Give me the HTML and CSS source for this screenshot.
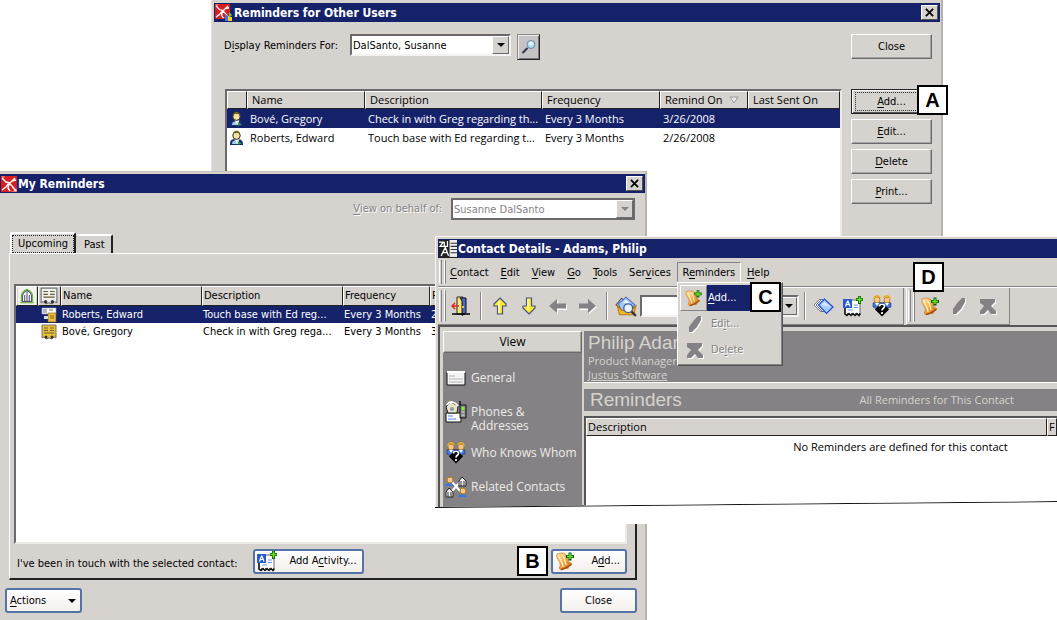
FILE: index.html
```html
<!DOCTYPE html>
<html lang="en">
<head>
<meta charset="utf-8">
<title>Reminders</title>
<link rel="stylesheet" href="styles.css">
</head>
<body>
<svg class="defs" aria-hidden="true">
  <defs>
    <linearGradient id="gold" x1="0" y1="0" x2="1" y2="1"><stop offset="0" stop-color="#ffe9b0"/><stop offset=".45" stop-color="#f8b04c"/><stop offset="1" stop-color="#b8600c"/></linearGradient>
  </defs>
  <symbol id="bell" viewBox="0 0 20 20">
    <circle cx="12" cy="16" r="2" fill="#d88020"/>
    <path d="M2 3C5 2 9 1 11 4c2 2 2 5 3 7l3 2c-2 2-6 4-11 6l-2-2c2-2 1-5 0-7S1 6 2 3z" fill="url(#gold)" stroke="#c87828" stroke-width=".7"/>
    <path d="M4 5c1 4 4 6 4 11M7 4c3 3 3 6 4 10" stroke="#fff0c8" stroke-width="1.200" fill="none"/>
    <path d="M6 18.500c4-1 8-3 10.500-5.500" stroke="#a04808" stroke-width="1.300" fill="none"/>
    <path d="M13.500 2v2H11v3h2.500v2.500h3V7H19V4h-2.500V1.500h-3z" fill="#0c5c0c"/>
    <path d="M15 2.500V8M12 5.500h6" stroke="#62e622" stroke-width="1.500"/>
  </symbol>
  <symbol id="activity" viewBox="0 0 22 22">
    <path d="M3 5h15v13l-2 2-2-2-2 2-2-2-2 2-2-2-2 2-1-1z" fill="#fff" stroke="#667" stroke-width="1"/>
    <path d="M3 12v7l2 1.500 2-2 2 2 2-2 2 2 2-2 2 2 1.500-2" fill="none" stroke="#111" stroke-width="1.500"/>
    <rect x="1" y="4" width="9" height="9" fill="#2a5ac8"/>
    <path d="M3.500 11.500l2-5.500h.5l2 5.500M4 9.500h3.500" stroke="#fff" stroke-width="1.200" fill="none"/>
    <path d="M12 10h4M12 12.500h4M6 15h5" stroke="#5a9cf0" stroke-width="1"/>
    <path d="M14 3h2V1h3v2h2v3h-2v3h-3V6h-2z" fill="#0c5c0c"/>
    <path d="M17.500 1.500V8M14.500 4.500h6" stroke="#62e622" stroke-width="1.500"/>
  </symbol>
  <symbol id="whom" viewBox="0 0 20 22">
    <path d="M1 8l3-1h4l2 2 2-2h4l3 1v4l-5 2H5l-4-2z" fill="#3c78e0" stroke="#123" stroke-width=".5"/>
    <circle cx="5" cy="5" r="3" fill="#f4c890" stroke="#b07010" stroke-width=".8"/>
    <circle cx="15" cy="5" r="3" fill="#f4c890" stroke="#b07010" stroke-width=".8"/>
    <path d="M2 4c0-4 6-4 6-1M12 3c0-3 6-3 6 1" stroke="#e8b020" stroke-width="1.500" fill="none"/>
    <path d="M3 8l2 3 2-3M13 8l2 3 2-3" fill="#fff"/>
    <path d="M10 7l7 7.500-7 7-7-7z" fill="#000"/>
    <path d="M7.500 11.500c0-3 5-3 5 0 0 2-2.500 1.500-2.500 4M10 17v2" stroke="#fff" stroke-width="1.700" fill="none"/>
  </symbol>
  <symbol id="pencil" viewBox="0 0 20 20">
    <path d="M14 3h3v4l-4 7-5 5H5v-5l5-7z" fill="#fff"/>
    <path d="M13 2h3v4l-4 7-5 5H4v-5l5-7z" fill="#858285"/>
  </symbol>
  <symbol id="cross" viewBox="0 0 20 20">
    <path d="M3 4h15v3l-4 4 5 5v3h-5l-3-4-4 4H3v-3l4-5-4-3z" fill="#fff"/>
    <path d="M2 3h15v3l-4 4 5 5v3h-5l-3-4-4 4H2v-3l4-5-4-3z" fill="#858285"/>
  </symbol>
  <symbol id="man" viewBox="0 0 14 16">
    <path d="M0 15c0-4 2-5 4-5h5c3 0 5 2 5 5v1H0z" fill="#14306e"/>
    <path d="M2 15l1-3 3-1 3 1 3 3z" fill="#a8cce8"/>
    <path d="M5 10h5l-2 5z" fill="#fff"/>
    <circle cx="7" cy="6" r="4" fill="#f2e0a0" stroke="#222" stroke-width="1"/>
    <path d="M3 6c-1-7 9-7 8 0l-2-3H5z" fill="#6c6018"/>
    <path d="M8 12l4 2-3 2z" fill="#2c9a46"/>
  </symbol>
  <symbol id="figure" viewBox="0 0 16 16">
    <rect width="16" height="16" fill="#d81e1e"/>
    <path d="M0 0h4l-2 4zM16 12v4h-6z" fill="#ee6a60"/>
    <path d="M1 2l4 4 4 1 5-5M8 7l3 3 4 5M8 7L5 11l-4 3M8 8l-1 4 2 3M11 5l4-1" stroke="#fff" stroke-width="1.400" fill="none"/>
  </symbol>
  <symbol id="card" viewBox="0 0 16 16">
    <path d="M1 1h14v13l-2-1-2 2-3-1-3 1-2-2-2 1z" fill="currentColor" stroke="#555" stroke-width=".8"/>
    <path d="M3 4h4M9 4h4M3 6.500h4M9 6.500h4M3 9h10" stroke="#665c30" stroke-width="1"/>
    <circle cx="5" cy="13" r="1.500" fill="#333"/><circle cx="11" cy="13" r="1.500" fill="#333"/>
  </symbol>
  <symbol id="down" viewBox="0 0 8 4"><path d="M0 0h8L4 4z" fill="currentColor"/></symbol>
  <symbol id="close" viewBox="0 0 10 9"><path d="M1 .5l8 8M9 .5l-8 8" stroke="#000" stroke-width="2"/></symbol>
</svg>

<main class="desktop">
  <section class="window users" aria-label="Reminders for Other Users">
    <header class="title">
      <svg class="i18" viewBox="0 0 18 18"><use href="#figure" width="15" height="15"/><path d="M10 10l3 2v5h-3z" fill="#3a76d8"/><path d="M14 8l3 3-3 3z" fill="#70c040"/><path d="M13 13h4v4h-4z" fill="#f8d020"/></svg>
      <h1>Reminders for Other Users</h1>
      <button class="x" aria-label="Close window"><svg><use href="#close"/></svg></button>
    </header>
    <div class="users-top">
      <label for="who">D<u>i</u>splay Reminders For:</label>
      <span class="combo wide">
        <select id="who"><option>DalSanto, Susanne</option></select>
        <span class="drop"><svg><use href="#down"/></svg></span>
      </span>
      <button class="find" aria-label="Find user"><svg viewBox="0 0 18 18"><path d="M2.500 15l5-5" stroke="#334" stroke-width="2"/><circle cx="11" cy="6.500" r="4" fill="#a8dcf8" stroke="#7486a8" stroke-width="1"/><circle cx="11" cy="5.500" r="2" fill="#effaff"/></svg></button>
      <button class="btn push">Close</button>
    </div>
    <div class="users-main">
      <div class="sunken">
        <table class="grid sans">
          <colgroup><col class="c20"><col class="c118"><col class="c177"><col class="c118"><col class="c88"><col></colgroup>
          <thead><tr><th></th><th>Name</th><th>Description</th><th>Frequency</th><th>Remind On <svg class="sort" viewBox="0 0 10 8"><path d="M1 1h8L5 7z" fill="#e8e8e8" stroke="#999"/></svg></th><th>Last Sent On</th></tr></thead>
          <tbody>
            <tr class="sel"><td><svg class="man"><use href="#man"/></svg></td><td>Bové, Gregory</td><td>Check in with Greg regarding th...</td><td>Every 3 Months</td><td>3/26/2008</td><td></td></tr>
            <tr><td><svg class="man"><use href="#man"/></svg></td><td>Roberts, Edward</td><td>Touch base with Ed regarding t...</td><td>Every 3 Months</td><td>2/26/2008</td><td></td></tr>
          </tbody>
        </table>
      </div>
      <div class="side-buttons">
        <button class="btn default"><span><u>A</u>dd...</span></button>
        <button class="btn"><u>E</u>dit...</button>
        <button class="btn"><u>D</u>elete</button>
        <button class="btn"><u>P</u>rint...</button>
        <b class="badge badge-a">A</b>
      </div>
    </div>
  </section>

  <section class="window mine" aria-label="My Reminders">
    <header class="title">
      <svg class="i16"><use href="#figure"/></svg>
      <h1>My Reminders</h1>
      <button class="x" aria-label="Close window"><svg><use href="#close"/></svg></button>
    </header>
    <div class="behalf">
      <label for="behalf"><u>V</u>iew on behalf of:</label>
      <span class="combo off">
        <select id="behalf" disabled><option>Susanne DalSanto</option></select>
        <span class="drop"><svg><use href="#down"/></svg></span>
      </span>
    </div>
    <nav class="tabs" role="tablist">
      <button class="tab on" role="tab" aria-selected="true"><span>Upcoming</span></button>
      <button class="tab" role="tab" aria-selected="false"><span>Past</span></button>
    </nav>
    <div class="panel">
      <div class="sunken">
        <table class="grid">
          <colgroup><col class="c22"><col class="c23"><col class="c141"><col class="c141"><col class="c87"><col></colgroup>
          <thead><tr>
            <th class="pic"><svg class="i18" viewBox="0 0 16 16"><rect width="16" height="16" fill="#f2f2ec"/><path d="M4 13V8c0-2 2-4 4-5 2 1 4 3 4 5v5z" fill="#fff" stroke="#557" stroke-width="1"/><path d="M6 13V7M8 13V4M10 13V7" stroke="#446" stroke-width=".9"/><path d="M3 13V8c0-3 3-5 5-6 2 1 5 3 5 6v5" fill="none" stroke="#6cb43c"/><path d="M2 14h12" stroke="#6cb43c"/></svg></th>
            <th class="pic"><svg class="i18 pale"><use href="#card"/></svg></th>
            <th>Name</th><th>Description</th><th>Frequency</th><th>Remind On</th></tr></thead>
          <tbody>
            <tr class="sel"><td></td><td class="pic"><svg class="i16" viewBox="0 0 16 16"><path d="M1 1h14v6H1z" fill="#fff" stroke="#99a" stroke-width=".6"/><path d="M2 3h4M8 3h4M2 5h4" stroke="#667"/><path d="M7 6h8v9H7z" fill="#e8c040" stroke="#765c10" stroke-width=".6"/><path d="M3 9h4v3H3z" fill="#ddd"/><path d="M9 9h4M9 11h4" stroke="#866810"/></svg></td><td>Roberts, Edward</td><td>Touch base with Ed reg...</td><td>Every 3 Months</td><td>2/26/2008</td></tr>
            <tr><td></td><td class="pic"><svg class="i16 amber"><use href="#card"/></svg></td><td>Bové, Gregory</td><td>Check in with Greg rega...</td><td>Every 3 Months</td><td>3/26/2008</td></tr>
          </tbody>
        </table>
      </div>
      <div class="panel-foot">
        <span class="note">I've been in touch with the selected contact:</span>
        <button class="xp act"><svg class="i22"><use href="#activity"/></svg><span>Add A<u>c</u>tivity...</span></button>
        <b class="badge">B</b>
        <button class="xp add"><svg class="i20"><use href="#bell"/></svg><span>A<u>d</u>d...</span></button>
      </div>
    </div>
    <footer class="foot">
      <button class="xp actions"><span><u>A</u>ctions</span><svg class="caret"><use href="#down"/></svg></button>
      <button class="xp mid">Close</button>
    </footer>
  </section>

  <div class="cover">
   <div class="edge">
    <section class="contact" aria-label="Contact Details">
      <header class="title">
        <svg class="i18" viewBox="0 0 17 17"><rect width="17" height="17" fill="#222"/><path d="M10 0h7v16h-7z" fill="#eee"/><path d="M11 3h6M11 6h6M11 9h6M11 12h6" stroke="#333"/><path d="M0 2h4L1 6h4M5 2v4h3V1M2 15l4-8 3 8M3 12h5" stroke="#fff" stroke-width="1.200" fill="none"/></svg>
        <h1>Contact Details - Adams, Philip</h1>
      </header>
      <nav class="menubar">
        <i class="grip"></i>
        <button><u>C</u>ontact</button>
        <button><u>E</u>dit</button>
        <button><u>V</u>iew</button>
        <button><u>G</u>o</button>
        <button><u>T</u>ools</button>
        <button>Ser<u>v</u>ices</button>
        <div class="open">
          <button class="opened">R<u>e</u>minders</button>
          <div class="dropdown">
            <button class="item hot"><svg class="i20"><use href="#bell"/></svg><span><u>A</u>dd...</span></button>
            <button class="item" disabled><svg class="i20"><use href="#pencil"/></svg><span>Ed<u>i</u>t...</span></button>
            <button class="item" disabled><svg class="i20"><use href="#cross"/></svg><span>De<u>l</u>ete</span></button>
            <b class="badge badge-c">C</b>
          </div>
        </div>
        <button><u>H</u>elp</button>
        <b class="badge badge-d">D</b>
      </nav>
      <div class="toolbar">
        <div class="tools">
          <i class="grip"></i>
          <button aria-label="Exit"><svg class="i20" viewBox="0 0 20 20"><path d="M6 1h6v17H6z" fill="#ffe96a" stroke="#223" stroke-width="1"/><path d="M9 2h6v15l-4 2.500V5z" fill="#5268b8" stroke="#112" stroke-width="1"/><path d="M12 10v2" stroke="#ffe96a" stroke-width="1.500"/><path d="M1 18h18" stroke="#000" stroke-width="1.500"/><path d="M8 10H2M4 7l-3 3 3 3" stroke="#e02828" stroke-width="1.500" fill="none"/></svg></button>
          <i class="sep"></i>
          <button aria-label="Previous contact"><svg class="i20" viewBox="0 0 20 20"><path d="M10 2l6 6v2h-3.500v8h-5v-8H4V8z" fill="#ffea28" stroke="#44508c" stroke-width="1.200"/><path d="M9 5v12" stroke="#fffcc0" stroke-width="1.500"/></svg></button>
          <button aria-label="Next contact"><svg class="i20" viewBox="0 0 20 20"><path d="M10 18l6-6v-2h-3.500V2h-5v8H4v2z" fill="#ffea28" stroke="#44508c" stroke-width="1.200"/><path d="M9 3v11" stroke="#fffcc0" stroke-width="1.500"/></svg></button>
          <button aria-label="Back" disabled><svg class="i20" viewBox="0 0 20 20"><path d="M2 11l8-7v5h9v5h-9v4z" fill="#fff"/><path d="M1 10l8-7v4.500h9v5H9V17z" fill="#858285"/></svg></button>
          <button aria-label="Forward" disabled><svg class="i20" viewBox="0 0 20 20"><path d="M20 11l-8-7v5H3v5h9v4z" fill="#fff"/><path d="M19 10l-8-7v4.500H2v5h9V17z" fill="#858285"/></svg></button>
          <i class="sep"></i>
          <button aria-label="Find contact"><svg class="i22" viewBox="0 0 20 20"><path d="M1 9l5-6 4 4-3 7z" fill="#fff" stroke="#556"/><path d="M3 8l7-6 8 7-5 6H6z" fill="#9ccaf8" stroke="#5068c8" stroke-width="1"/><path d="M7 7l3-3 4 4z" fill="#eef8ff"/><path d="M2 9l2 9h13l2-8-5 4H6z" fill="#f4b830" stroke="#b87810" stroke-width="1"/><circle cx="12" cy="12" r="4" fill="#e4f6ff" stroke="#445c98" stroke-width="1.200"/><path d="M15 15l4 4" stroke="#333" stroke-width="2"/></svg></button>
          <span class="combo jump">
            <select aria-label="Contact"><option></option></select>
            <span class="drop"><svg><use href="#down"/></svg></span>
          </span>
          <i class="sep"></i>
          <button aria-label="Views"><svg class="i20" viewBox="0 0 20 20"><path d="M0 9l6-6 7 7-6 6z" fill="#fff" stroke="#778" stroke-width="1"/><path d="M2 9l6-6 7 7-6 6z" fill="#fff" stroke="#4c70c8"/><path d="M4.500 9l6-6 8.500 8-6.500 6.500z" fill="#a4ccff" stroke="#2848d0" stroke-width="1.200"/><path d="M7.500 9l3-3 6 5" fill="#d8ecff"/></svg></button>
          <button aria-label="Add activity"><svg class="i22"><use href="#activity"/></svg></button>
          <button aria-label="Who knows whom"><svg class="i22"><use href="#whom"/></svg></button>
        </div>
        <div class="tools">
          <i class="grip"></i>
          <button aria-label="Add reminder"><svg class="i20"><use href="#bell"/></svg></button>
          <button aria-label="Edit reminder" disabled><svg class="i20"><use href="#pencil"/></svg></button>
          <button aria-label="Delete reminder" disabled><svg class="i20"><use href="#cross"/></svg></button>
        </div>
      </div>
      <div class="body">
        <aside class="views sans">
          <button class="btn view">View</button>
          <a href="#general"><svg class="i22" viewBox="0 0 22 22"><path d="M2 5h18v13H2z" fill="#f4f4f4" stroke="#111" stroke-width="1"/><path d="M2 5h18" stroke="#fff" stroke-width="2"/><path d="M4 9h6M4 12h14M4 15h14" stroke="#b4b4b4"/></svg><span>General</span></a>
          <a href="#phones"><svg class="i22" viewBox="0 0 22 22"><path d="M1 12h15v9H1z" fill="#fff" stroke="#111"/><path d="M3 15h5M3 18h8" stroke="#4c84d8"/><path d="M1 6l5-5 7 4-1 7H3z" fill="#e4e4cc" stroke="#222"/><path d="M2 4c3-5 8-3 11 1" stroke="#fff" stroke-width="2" fill="none"/><circle cx="7" cy="8" r="2" fill="#999"/><path d="M15 4h6v13h-6z" fill="#888" stroke="#111"/><path d="M15 0v4" stroke="#111" stroke-width="1.500"/><path d="M16.500 6h3v3h-3z" fill="#7ef038"/><path d="M16.500 11h3M16.500 14h3" stroke="#ddd"/></svg><span>Phones &amp; Addresses</span></a>
          <a href="#whoknows"><svg class="i22"><use href="#whom"/></svg><span>Who Knows Whom</span></a>
          <a href="#related"><svg class="i22" viewBox="0 0 22 22"><path d="M7 6l8 9M15 6l-8 9" stroke="#fff" stroke-width="2"/><path d="M0 10c1-4 7-4 9 0z" fill="#3c78e0"/><circle cx="5" cy="4" r="3" fill="#f4c890" stroke="#b87810"/><path d="M13 21c1-4 8-4 9 0z" fill="#3c78e0"/><circle cx="18" cy="15" r="3" fill="#f4c890" stroke="#b87810"/><path d="M14 10V5l3-4 4 4v5zM1 21v-5l3-4 4 4v5z" fill="#eee" stroke="#222"/><path d="M16 10V5M19 10V5M3 21v-5M6 21v-5" stroke="#333"/></svg><span>Related Contacts</span></a>
        </aside>
        <div class="detail sans">
          <div class="who">
            <h2>Philip Adams</h2>
            <p>Product Manager</p>
            <a href="#company">Justus Software</a>
          </div>
          <div class="heading"><h2>Reminders</h2><span>All Reminders for This Contact</span></div>
          <table class="grid list">
            <colgroup><col><col class="c10"></colgroup>
            <thead><tr><th>Description</th><th>F</th></tr></thead>
            <tbody><tr><td class="empty" colspan="2">No Reminders are defined for this contact</td></tr></tbody>
          </table>
        </div>
      </div>
    </section>
   </div>
  </div>
</main>
</body>
</html>
```
FILE: styles.css
```css
:root {
  --face: #d6d3ce;
  --navy: #15226a;
  --grey: #858285;
  --dark: #6b696b;
  --ui: "DejaVu Sans Condensed", "DejaVu Sans", sans-serif;
  --sans: "Open Sans", "Liberation Sans", sans-serif;
}
* { box-sizing: border-box; }
body { margin: 0; background: #fff; color: #000; font: 11px/14px var(--ui); }
button, select { font: inherit; color: inherit; margin: 0; padding: 0; }
button { border: 0; background: none; white-space: nowrap; }
h1, h2, p { margin: 0; font: inherit; }
svg { display: block; flex: none; }
u { text-underline-offset: 2px; }
.defs { position: absolute; width: 0; height: 0; }
.i16 { width: 16px; height: 16px; }
.i18 { width: 18px; height: 18px; }
.i20 { width: 20px; height: 20px; }
.i22 { width: 22px; height: 22px; }

.desktop { position: relative; height: 100vh; min-height: 620px; overflow: hidden; }
.window { position: absolute; background: var(--face); border-right: 2px solid #b5b2b0; }
.users { left: 211px; right: 114px; top: 0; padding: 3px 1px 0 2px; border-left: 1px solid #e7e5e2; }
.mine { left: 0; right: 410px; top: 171px; bottom: 0; padding-top: 2px; border-top: 1px solid #c6c3be; display: flex; flex-direction: column; }

.title { display: flex; align-items: center; gap: 1px; height: 19px; padding: 0 2px 0 1px; background: var(--navy); color: #fff; }
.title h1 { flex: 1; font-size: 12px; font-weight: bold; white-space: nowrap; }
.x { width: 17px; height: 15px; padding: 2px 3px; background: var(--face); border: 1px solid; border-color: #fff #55534f #55534f #fff; }
.x svg { width: 9px; height: 9px; }

.combo { position: relative; display: block; height: 22px; background: #fff; border: 2px solid; border-color: var(--dark) #f4f3f1 #f4f3f1 var(--dark); }
.combo select { display: block; width: 100%; height: 100%; padding: 1px 0 0 1px; border: 0; background: none; appearance: none; outline: 0; }
.combo select:disabled { opacity: 1; }
.drop { position: absolute; right: 0; top: 0; bottom: 0; width: 17px; display: grid; place-items: center; background: var(--face); border: 1px solid; border-color: #fff var(--dark) var(--dark) #fff; pointer-events: none; }
.drop svg, .caret { width: 8px; height: 4px; }
.off { color: #858285; border-right-color: var(--dark); border-bottom-color: var(--dark); }

.btn { height: 25px; background: var(--face); border: 1px solid; border-color: #fff #6b696b #6b696b #fff; box-shadow: inset -1px -1px #a5a29f; text-align: center; }
.default { border-color: #222; box-shadow: inset 1px 1px #fff, inset -1px -1px #555; padding: 2px 3px; }
.default span { display: block; border: 1px dotted #333; line-height: 17px; }

.users-top { display: flex; align-items: flex-start; padding: 12px 8px 0 10px; height: 67px; }
.users-top label { line-height: 24px; width: 126px; white-space: nowrap; }
.wide { width: 161px; margin-right: 6px; }
.find { width: 23px; height: 26px; padding: 3px 2px; background: #c6c3c4; border: 1px solid; border-color: #888 #222 #222 #888; box-shadow: inset 1px 1px #eee, inset -1px -1px #777; }
.find svg { width: 18px; height: 18px; }
.push { margin-left: auto; width: 81px; }
.users-main { display: flex; gap: 9px; padding: 0 8px 0 11px; }
.sunken { flex: 1; min-width: 0; background: #fff; border: 2px solid; border-color: var(--dark) #eceae7 #eceae7 var(--dark); overflow: hidden; }
.users-main .sunken { min-height: 150px; }
.side-buttons { position: relative; width: 81px; display: flex; flex-direction: column; gap: 5px; }

.badge { display: grid; place-items: center; flex: none; width: 31px; height: 30px; background: #fff; border: 2px solid #000; color: #000; font: bold 20px/20px "Liberation Sans", Arial, sans-serif; }
.badge-a { position: absolute; left: 66px; top: -4px; }
.badge-c { position: absolute; left: 72px; top: -1px; }
.badge-d { position: absolute; left: 475px; top: 4px; z-index: 1; }

.sans { font-family: var(--sans); }
.grid { width: 100%; table-layout: fixed; border-collapse: separate; border-spacing: 0; }
.grid th { height: 18px; padding: 0 1px; text-align: left; font-weight: normal; background: var(--face); border: 1px solid; border-color: #fff #222 #222 #fff; white-space: nowrap; overflow: hidden; }
.grid td { height: 17px; padding: 0 1px; white-space: nowrap; overflow: hidden; }
.grid.sans th { padding-left: 4px; }
.grid.sans td { height: 19px; padding-left: 3px; }
.sel td { background: var(--navy); color: #fff; }
.grid .pic { padding: 0 3px; }
.grid th.pic { padding: 0 1px; }
.man { width: 13px; height: 15px; }
.sort { display: inline-block; width: 10px; height: 8px; margin-left: 4px; }
.pale { color: #eee; }
.amber { color: #e8c040; }
.c10 { width: 10px; }
.c20 { width: 20px; }
.c22 { width: 22px; }
.c23 { width: 23px; }
.c87 { width: 87px; }
.c88 { width: 88px; }
.c118 { width: 118px; }
.c141 { width: 141px; }
.c177 { width: 177px; }

.behalf { display: flex; justify-content: flex-end; align-items: center; gap: 9px; padding: 5px 10px 0 0; }
.behalf label, .item:disabled { color: #858285; text-shadow: 1px 1px #fff; }
.behalf .combo { width: 184px; }
.tabs { display: flex; align-items: flex-end; height: 33px; padding-left: 10px; }
.tab { height: 19px; padding: 0 6px; border: 2px solid; border-color: #fff #222 transparent transparent; border-bottom: 0; border-radius: 2px 2px 0 0; }
.tab.on { height: 21px; padding: 0; border-left-color: #fff; }
.tab.on span { display: block; padding: 1px 5px; border: 1px dotted #222; }
.panel { flex: 1; display: flex; flex-direction: column; margin: 0 8px 0 9px; padding: 30px 8px 0 4px; border: 1px solid; border-color: #fff #222 #222 #fff; border-right-width: 2px; border-bottom-width: 2px; }
.panel-foot { display: flex; align-items: center; height: 34px; padding-left: 3px; white-space: nowrap; }
.note { padding-top: 6px; }
.panel-foot .badge { margin: 0 3px 0 auto; }
.xp { display: flex; align-items: center; height: 25px; border: 2px solid #5474a8; border-radius: 3px; background: linear-gradient(#fff, #f3efeb); }
.act { width: 111px; margin-left: 15px; padding: 0 5px 0 1px; justify-content: space-between; }
.add { width: 76px; padding: 0 5px 0 2px; justify-content: space-between; }
.foot { display: flex; justify-content: space-between; padding: 8px 8px 7px 5px; }
.actions { width: 77px; justify-content: space-between; padding: 0 4px 0 3px; }
.mid { width: 77px; justify-content: center; }

.cover { position: absolute; left: 435px; right: 0; top: 236px; padding-bottom: 16px; background: #fff; }
.edge { background: #111; padding-bottom: 1px; clip-path: polygon(0 0, 100% 0, 100% calc(100% - 6px), 0 100%); }
.contact { background: var(--face); border-left: 1px solid #f7f6f4; border-top: 1px solid #f7f6f4; padding: 2px 0 0 2px; clip-path: polygon(0 0, 100% 0, 100% calc(100% - 6px), 0 100%); }
.grip { flex: none; width: 7px; align-self: stretch; margin: 2px 0; border: 1px solid; border-color: transparent #858285 transparent #fff; background: linear-gradient(90deg, transparent 1px, #858285 1px 2px, transparent 2px 4px, #fff 4px); }
.menubar { position: relative; display: flex; align-items: center; height: 29px; padding-left: 1px; border-bottom: 1px solid #858285; }
.menubar > button { padding: 2px 6px 0; }
.menubar .grip + button { padding-left: 4px; }
.open { position: relative; }
.opened { width: 64px; height: 20px; padding-top: 2px; border: 1px solid; border-color: #858285 #fff transparent #858285; }
.dropdown { position: absolute; z-index: 2; left: 0; top: 100%; width: 106px; padding: 2px; background: var(--face); border: 1px solid; border-color: #fff #555 #555 #fff; box-shadow: inset -1px -1px #858285; }
.item { display: flex; align-items: center; width: 100%; height: 26px; padding-left: 5px; gap: 6px; text-align: left; }
.item.hot { padding: 0; gap: 0; }
.hot svg { width: 27px; height: 26px; padding: 3px; border: 1px solid; border-color: #fff #858285 #858285 #fff; }
.hot span { flex: 1; line-height: 26px; padding-left: 1px; background: var(--navy); color: #fff; }

.toolbar { display: flex; gap: 2px; height: 38px; border-top: 1px solid #fff; }
.tools { display: flex; align-items: center; height: 37px; padding: 0 7px 0 1px; border-right: 1px solid #858285; border-bottom: 1px solid #858285; }
.tools button { width: 29px; height: 30px; display: grid; place-items: center; }
.tools + .tools { border-left: 1px solid #fff; }
.sep { width: 2px; height: 28px; margin: 0 3px 0 5px; border-left: 1px solid #858285; border-right: 1px solid #fff; }
.jump { width: 159px; }

.body { display: flex; border: solid #555; border-width: 2px 0 0 2px; padding: 4px 0 0 3px; gap: 2px; }
.views { width: 139px; flex: none; background: var(--grey); color: #eeece8; }
.view { display: block; width: 100%; height: 22px; color: #000; margin-bottom: 14px; }
.views a { display: flex; align-items: flex-start; gap: 4px; min-height: 25px; padding-left: 2px; margin-bottom: 9px; color: inherit; text-decoration: none; }
.views a:last-child { margin-bottom: 0; }
.views, .who { font-size: 12px; }
.views a span { padding-top: 4px; width: 110px; }
.detail { flex: 1; min-width: 0; }
.who { height: 52px; padding: 1px 4px; background: var(--grey); border-bottom: 1px solid #fff; color: var(--face); font-size: 11px; }
.who h2, .heading h2 { font: 19px/22px "Liberation Sans", Arial, sans-serif; }
.who a { color: inherit; }
.heading { display: flex; align-items: center; justify-content: space-between; margin: 6px 0 5px; height: 22px; padding: 0 43px 0 6px; background: var(--grey); color: var(--face); }
.list { background: #fff; border-top: 2px solid #555; border-left: 2px solid #555; }
.detail .list td { height: 71px; padding: 4px 0 0 158px; vertical-align: top; text-align: center; }
.detail .list th + th { padding: 0 0 0 1px; }
```
